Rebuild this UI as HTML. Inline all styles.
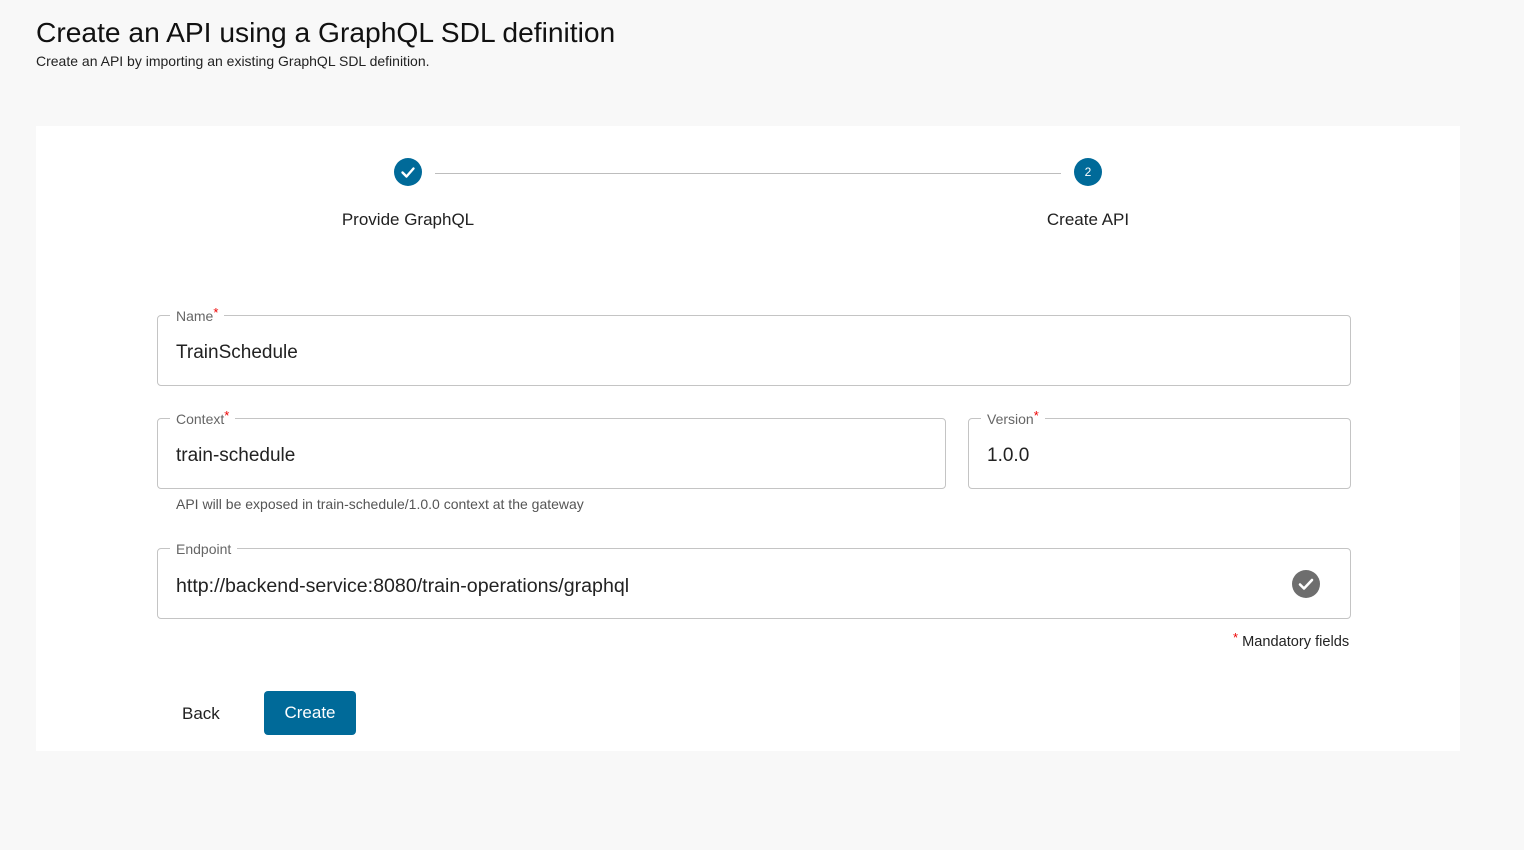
<!DOCTYPE html>
<html><head><meta charset="utf-8"><style>
*{box-sizing:border-box;margin:0;padding:0}
body{width:1524px;height:850px;background:#f8f8f8;font-family:"Liberation Sans",sans-serif;color:#212121;position:relative;overflow:hidden}
.a{position:absolute}
.card{left:36px;top:126px;width:1424px;height:625px;background:#fff}
.field{position:absolute;border:1px solid #c4c4c4;border-radius:4px}
.lbl{position:absolute;top:-8px;left:12px;background:#fff;padding:0 6px;font-size:14px;color:#666}
.lbl i{color:#e00;font-style:normal;position:relative;top:-4px;font-size:13px}
.val{position:absolute;left:18px;top:26px;font-size:19px;color:#222}
</style></head><body>
<div class="a" style="left:36px;top:16px;font-size:28.2px;color:#111">Create an API using a GraphQL SDL definition</div>
<div class="a" style="left:36px;top:53px;font-size:14px;color:#222">Create an API by importing an existing GraphQL SDL definition.</div>
<div class="a card"></div>
<div class="a" style="left:394px;top:158px;width:28px;height:28px;border-radius:50%;background:#006a99"><svg width="28" height="28"><path d="M8.5 14.5l4 4 7-8" stroke="#fff" stroke-width="2.4" fill="none" stroke-linecap="round" stroke-linejoin="round"/></svg></div>
<div class="a" style="left:435px;top:173px;width:626px;height:1px;background:#bdbdbd"></div>
<div class="a" style="left:1074px;top:158px;width:28px;height:28px;border-radius:50%;background:#006a99;color:#fff;font-size:12px;text-align:center;line-height:28px">2</div>
<div class="a" style="left:308px;top:210px;width:200px;text-align:center;font-size:17px">Provide GraphQL</div>
<div class="a" style="left:988px;top:210px;width:200px;text-align:center;font-size:17px">Create API</div>
<div class="field" style="left:157px;top:315px;width:1194px;height:71px"><span class="lbl">Name<i>*</i></span><span class="val">TrainSchedule</span></div>
<div class="field" style="left:157px;top:418px;width:789px;height:71px"><span class="lbl">Context<i>*</i></span><span class="val">train-schedule</span></div>
<div class="field" style="left:968px;top:418px;width:383px;height:71px"><span class="lbl">Version<i>*</i></span><span class="val">1.0.0</span></div>
<div class="a" style="left:176px;top:496px;font-size:14px;color:#555">API will be exposed in train-schedule/1.0.0 context at the gateway</div>
<div class="field" style="left:157px;top:548px;width:1194px;height:71px"><span class="lbl">Endpoint</span><span class="val" style="font-size:19.6px">http://backend-service:8080/train-operations/graphql</span>
<div class="a" style="left:1134px;top:21px;width:28px;height:28px;border-radius:50%;background:#6e6e6e"><svg width="28" height="28"><path d="M8 14.5l4 4 8-8.5" stroke="#fff" stroke-width="2.6" fill="none" stroke-linecap="round" stroke-linejoin="round"/></svg></div></div>
<div class="a" style="left:1233px;top:634px;font-size:14.6px;color:#222"><span style="color:#e00;position:relative;top:-4px;font-size:13px">*</span> Mandatory fields</div>
<div class="a" style="left:182px;top:704px;font-size:17px">Back</div>
<div class="a" style="left:264px;top:691px;width:92px;height:44px;background:#006a99;border-radius:4px;color:#fff;font-size:17px;text-align:center;line-height:44px">Create</div>
</body></html>
